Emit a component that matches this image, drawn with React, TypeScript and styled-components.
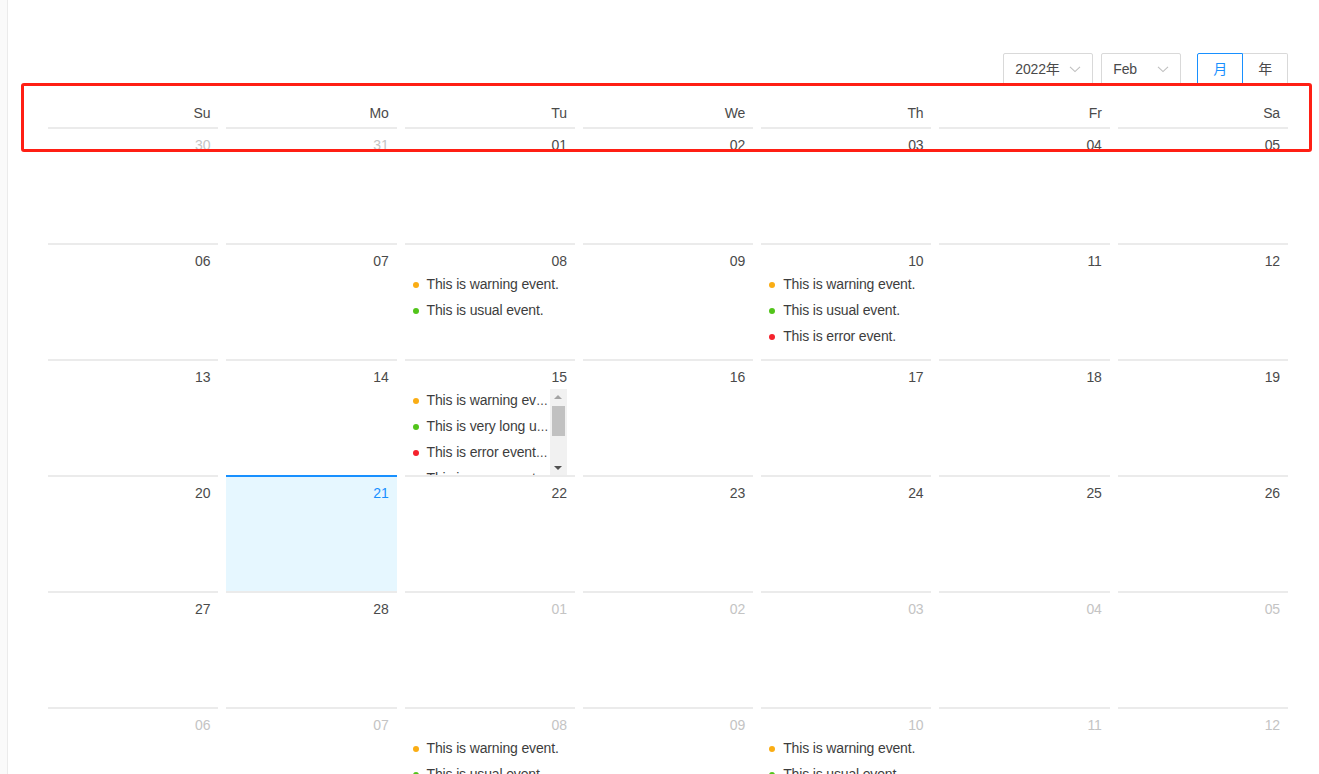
import styled, { createGlobalStyle } from "styled-components";

type EventType = "warning" | "success" | "error";
type CalEvent = { type: EventType; content: string };
type Day = { label: string; muted?: boolean; today?: boolean; events: CalEvent[] };

const DOT_COLORS: Record<EventType, string> = {
  warning: "#faad14",
  success: "#52c41a",
  error: "#f5222d",
};

const WEEK_DAYS = ["Su", "Mo", "Tu", "We", "Th", "Fr", "Sa"];

// cell body is 86px tall, each event line takes 26px
const VISIBLE_EVENTS = 3;

const eventsFor = (day: number): CalEvent[] => {
  switch (day) {
    case 8:
      return [
        { type: "warning", content: "This is warning event." },
        { type: "success", content: "This is usual event." },
      ];
    case 10:
      return [
        { type: "warning", content: "This is warning event." },
        { type: "success", content: "This is usual event." },
        { type: "error", content: "This is error event." },
      ];
    case 15:
      return [
        { type: "warning", content: "This is warning event" },
        { type: "success", content: "This is very long usual event。。...." },
        { type: "error", content: "This is error event 1." },
        { type: "error", content: "This is error event 2." },
        { type: "error", content: "This is error event 3." },
        { type: "error", content: "This is error event 4." },
      ];
    default:
      return [];
  }
};

const pad = (n: number) => (n < 10 ? `0${n}` : `${n}`);

const buildDays = (): Day[] => {
  const days: Day[] = [];
  [30, 31].forEach((d) => days.push({ label: pad(d), muted: true, events: eventsFor(d) }));
  for (let d = 1; d <= 28; d++) {
    days.push({ label: pad(d), today: d === 21, events: eventsFor(d) });
  }
  for (let d = 1; d <= 12; d++) {
    days.push({ label: pad(d), muted: true, events: eventsFor(d) });
  }
  return days;
};

const GlobalStyle = createGlobalStyle`
  * {
    box-sizing: border-box;
  }
  html, body {
    margin: 0;
    padding: 0;
    background: #fff;
    overflow: hidden;
  }
  body {
    font-family: "Liberation Sans", "Noto Sans CJK SC", sans-serif;
    font-size: 14px;
    letter-spacing: -0.15px;
    color: #3d3d3d;
  }
`;

const Page = styled.div`
  position: relative;
  display: flex;
  height: 774px;
  overflow: hidden;
`;

const SideStrip = styled.div`
  flex: none;
  width: 8px;
  background: #fafafa;
  border-right: 1px solid #ebebeb;
`;

const Main = styled.main`
  flex: 1;
  min-width: 0;
  padding: 53px 27px 0 36px;
`;

const Header = styled.div`
  display: flex;
  justify-content: flex-end;
  align-items: center;
  gap: 8px;
  padding-right: 4px;
  margin-bottom: 19px;
`;

const Select = styled.div<{ $width: number }>`
  width: ${(p) => p.$width}px;
  height: 32px;
  padding: 0 11px;
  display: flex;
  align-items: center;
  justify-content: space-between;
  border: 1px solid #d9d9d9;
  border-radius: 2px;
  background: #fff;
  line-height: 30px;
  color: #4a4a4a;
`;

const Chevron = styled.svg`
  width: 12px;
  height: 12px;
  color: #bfbfbf;
`;

const RadioGroup = styled.div`
  display: flex;
  margin-left: 8px;
`;

const RadioButton = styled.div<{ $active?: boolean; $first?: boolean }>`
  height: 32px;
  padding: 0 15px;
  line-height: 30px;
  border: 1px solid ${(p) => (p.$active ? "#1890ff" : "#d9d9d9")};
  border-left-width: ${(p) => (p.$first ? "1px" : "0")};
  border-radius: ${(p) => (p.$first ? "2px 0 0 2px" : "0 2px 2px 0")};
  color: ${(p) => (p.$active ? "#1890ff" : "#4a4a4a")};
  background: #fff;
`;

const Grid = styled.div`
  display: grid;
  grid-template-columns: repeat(7, 1fr);
`;

const WeekDay = styled.div`
  padding: 0 12px 5px 0;
  line-height: 18px;
  text-align: right;
  color: #4a4a4a;
`;

const DateCell = styled.div<{ $today?: boolean }>`
  margin: 0 4px;
  padding: 4px 8px 0;
  border-top: 2px solid ${(p) => (p.$today ? "#1890ff" : "#ebebeb")};
  background: ${(p) => (p.$today ? "#e6f7ff" : "transparent")};
  min-width: 0;
`;

const DateValue = styled.div<{ $muted?: boolean; $today?: boolean }>`
  line-height: 24px;
  text-align: right;
  color: ${(p) => (p.$today ? "#1890ff" : p.$muted ? "#c4c4c4" : "#4a4a4a")};
`;

const CellBody = styled.div`
  display: flex;
  height: 86px;
`;

const EventList = styled.ul`
  flex: 1;
  min-width: 0;
  margin: 0;
  padding: 0;
  list-style: none;
  overflow: hidden;
`;

const EventItem = styled.li`
  height: 22px;
  margin-bottom: 4px;
  font-size: 12px;
  line-height: 22px;
  white-space: nowrap;
  overflow: hidden;
  text-overflow: ellipsis;
`;

const Dot = styled.span<{ $color: string }>`
  display: inline-block;
  width: 6px;
  height: 6px;
  margin-right: 8px;
  border-radius: 50%;
  vertical-align: middle;
  position: relative;
  top: -1px;
  background: ${(p) => p.$color};
`;

const EventText = styled.span`
  font-size: 14px;
`;

const ScrollTrack = styled.div`
  flex: none;
  width: 17px;
  display: flex;
  flex-direction: column;
  background: #f1f1f1;
`;

const ScrollButton = styled.div<{ $down?: boolean }>`
  flex: none;
  height: 17px;
  display: flex;
  align-items: center;
  justify-content: center;

  &::after {
    content: "";
    width: 0;
    height: 0;
    border-left: 4px solid transparent;
    border-right: 4px solid transparent;
    ${(p) =>
      p.$down
        ? "border-top: 4px solid #505050; margin-top: 3px;"
        : "border-bottom: 4px solid #a3a3a3; margin-top: -2px;"}
  }
`;

const ScrollThumb = styled.div`
  flex: none;
  height: 30px;
  margin: 0 2px;
  background: #c1c1c1;
`;

const ScrollSpace = styled.div`
  flex: 1;
`;

const Annotation = styled.div`
  position: absolute;
  left: 21px;
  top: 83px;
  width: 1291px;
  height: 69px;
  border: 3px solid #ff1f14;
  border-radius: 3px;
  pointer-events: none;
`;

const ChevronDown = () => (
  <Chevron viewBox="0 0 12 12" fill="none">
    <path d="M1 3.8 6 8.6 11 3.8" stroke="currentColor" strokeWidth="1.1" />
  </Chevron>
);

const App = () => {
  const days = buildDays();
  return (
    <Page>
      <GlobalStyle />
      <SideStrip />
      <Main>
        <Header>
          <Select $width={90}>
            <span>2022年</span>
            <ChevronDown />
          </Select>
          <Select $width={80}>
            <span>Feb</span>
            <ChevronDown />
          </Select>
          <RadioGroup>
            <RadioButton $active $first>
              月
            </RadioButton>
            <RadioButton>年</RadioButton>
          </RadioGroup>
        </Header>
        <Grid>
          {WEEK_DAYS.map((w) => (
            <WeekDay key={w}>{w}</WeekDay>
          ))}
          {days.map((day, i) => (
            <DateCell key={i} $today={day.today}>
              <DateValue $muted={day.muted} $today={day.today}>
                {day.label}
              </DateValue>
              <CellBody>
                <EventList>
                  {day.events.map((ev, j) => (
                    <EventItem key={j}>
                      <Dot $color={DOT_COLORS[ev.type]} />
                      <EventText>{ev.content}</EventText>
                    </EventItem>
                  ))}
                </EventList>
                {day.events.length > VISIBLE_EVENTS && (
                  <ScrollTrack>
                    <ScrollButton />
                    <ScrollThumb />
                    <ScrollSpace />
                    <ScrollButton $down />
                  </ScrollTrack>
                )}
              </CellBody>
            </DateCell>
          ))}
        </Grid>
      </Main>
      <Annotation />
    </Page>
  );
};

export default App;
